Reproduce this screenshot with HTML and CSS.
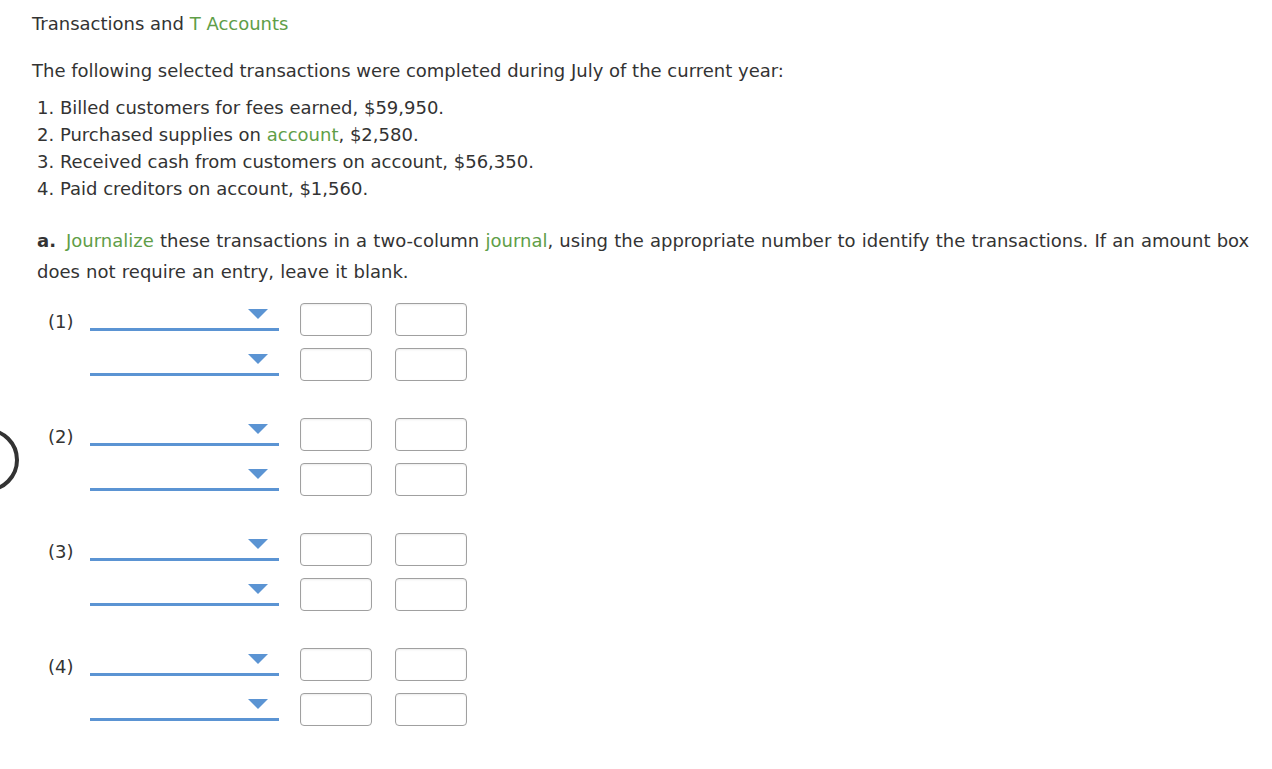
FILE: index.html
```html
<!DOCTYPE html>
<html lang="en">
<head>
    <meta charset="UTF-8">
    <title>Transactions and T Accounts</title>
    <link rel="stylesheet" href="styles.css">
</head>
<body>
    <div class="page">
        <h1 class="title">Transactions and <span class="term">T Accounts</span></h1>
        <p class="intro">The following selected transactions were completed during July of the current year:</p>
        <ol class="items">
            <li>Billed customers for fees earned, $59,950.</li>
            <li>Purchased supplies on <span class="term">account</span>, $2,580.</li>
            <li>Received cash from customers on account, $56,350.</li>
            <li>Paid creditors on account, $1,560.</li>
        </ol>
        <p class="task"><b class="part">a.</b><span class="term">Journalize</span> these transactions in a two-column <span class="term">journal</span>, using the appropriate number to identify the transactions. If an amount box does not require an entry, leave it blank.</p>

        <div class="journal">
            <div class="entry">
                <div class="num">(1)</div>
                <div class="rows">
                    <div class="row"><div class="pick"><span class="arrow"></span></div><input class="amt"><input class="amt"></div>
                    <div class="row"><div class="pick"><span class="arrow"></span></div><input class="amt"><input class="amt"></div>
                </div>
            </div>
            <div class="entry">
                <div class="num">(2)</div>
                <div class="rows">
                    <div class="row"><div class="pick"><span class="arrow"></span></div><input class="amt"><input class="amt"></div>
                    <div class="row"><div class="pick"><span class="arrow"></span></div><input class="amt"><input class="amt"></div>
                </div>
            </div>
            <div class="entry">
                <div class="num">(3)</div>
                <div class="rows">
                    <div class="row"><div class="pick"><span class="arrow"></span></div><input class="amt"><input class="amt"></div>
                    <div class="row"><div class="pick"><span class="arrow"></span></div><input class="amt"><input class="amt"></div>
                </div>
            </div>
            <div class="entry">
                <div class="num">(4)</div>
                <div class="rows">
                    <div class="row"><div class="pick"><span class="arrow"></span></div><input class="amt"><input class="amt"></div>
                    <div class="row"><div class="pick"><span class="arrow"></span></div><input class="amt"><input class="amt"></div>
                </div>
            </div>
        </div>
    </div>
    <div class="side-handle"></div>
</body>
</html>
```

FILE: styles.css
```css
body { margin: 0; font-family: "DejaVu Sans", Verdana, sans-serif; font-size: 18px; color: #333; background: #fff; }
.page { padding: 14px 0 40px 32px; }
.term { color: #5f9e48; }
.title { font-size: 18px; font-weight: normal; line-height: 20px; margin: 0; }
.intro { line-height: 20px; margin: 27px 0 0; }
.items { margin: 13px 0 0; padding: 0 0 0 5px; list-style-position: inside; line-height: 27px; }
.task { margin: 23px 8px 0 5px; line-height: 31px; word-spacing: 0.5px; }
.part { font-weight: bold; margin-right: 10px; }
.journal { margin-top: 16px; padding-left: 16px; }
.entry { display: flex; margin-bottom: 25px; }
.num { width: 42px; padding-top: 9px; line-height: 20px; }
.row { display: flex; height: 45px; }
.pick { position: relative; width: 189px; height: 25px; border-bottom: 3px solid #5b94d3; margin-right: 21px; }
.arrow { position: absolute; right: 11px; top: 6px; width: 0; height: 0; border-left: 10px solid transparent; border-right: 10px solid transparent; border-top: 10px solid #5b94d3; }
.amt { box-sizing: border-box; width: 72px; height: 33px; margin: 0 23px 0 0; padding: 0; border: 1px solid #a0a0a0; border-radius: 4px; box-shadow: inset 0 1px 2px rgba(0,0,0,0.08); background: #fff; }
.side-handle { position: absolute; left: -45px; top: 428px; width: 56px; height: 56px; border: 4px solid #333; border-radius: 50%; }
```
